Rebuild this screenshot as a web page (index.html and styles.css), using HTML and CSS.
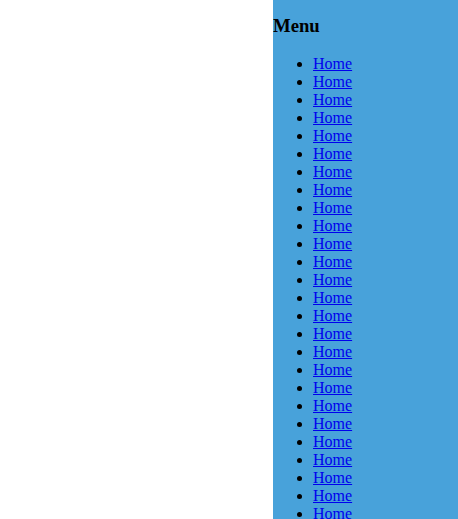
FILE: index.html
```html
<!DOCTYPE html>
<html>
<head>
<meta charset="utf-8">
<link rel="stylesheet" href="styles.css">
</head>
<body>
<div class="page">
  <main class="main"></main>
  <aside class="sidebar">
    <h3 class="title">Menu</h3>
    <ul class="menu">
      <li><a href="#">Home</a></li>
      <li><a href="#">Home</a></li>
      <li><a href="#">Home</a></li>
      <li><a href="#">Home</a></li>
      <li><a href="#">Home</a></li>
      <li><a href="#">Home</a></li>
      <li><a href="#">Home</a></li>
      <li><a href="#">Home</a></li>
      <li><a href="#">Home</a></li>
      <li><a href="#">Home</a></li>
      <li><a href="#">Home</a></li>
      <li><a href="#">Home</a></li>
      <li><a href="#">Home</a></li>
      <li><a href="#">Home</a></li>
      <li><a href="#">Home</a></li>
      <li><a href="#">Home</a></li>
      <li><a href="#">Home</a></li>
      <li><a href="#">Home</a></li>
      <li><a href="#">Home</a></li>
      <li><a href="#">Home</a></li>
      <li><a href="#">Home</a></li>
      <li><a href="#">Home</a></li>
      <li><a href="#">Home</a></li>
      <li><a href="#">Home</a></li>
      <li><a href="#">Home</a></li>
      <li><a href="#">Home</a></li>
    </ul>
  </aside>
</div>
</body>
</html>
```
FILE: styles.css
```css
html, body {
  margin: 0;
  padding: 0;
  background: #ffffff;
  font-family: "Liberation Serif", "Times New Roman", serif;
  font-size: 16px;
}
.page {
  display: flex;
  height: 519px;
  overflow: hidden;
}
.main {
  flex: 1;
}
.sidebar {
  width: 185px;
  background: #48a2da;
  overflow: hidden;
}
.title {
  font-size: 18.72px;
  font-weight: bold;
  line-height: 22px;
  margin: 15px 0 18px 0;
  color: #000;
}
.menu {
  margin: 0;
  padding-left: 40px;
  line-height: 18px;
}
.menu a {
  color: #0000ee;
}
```
